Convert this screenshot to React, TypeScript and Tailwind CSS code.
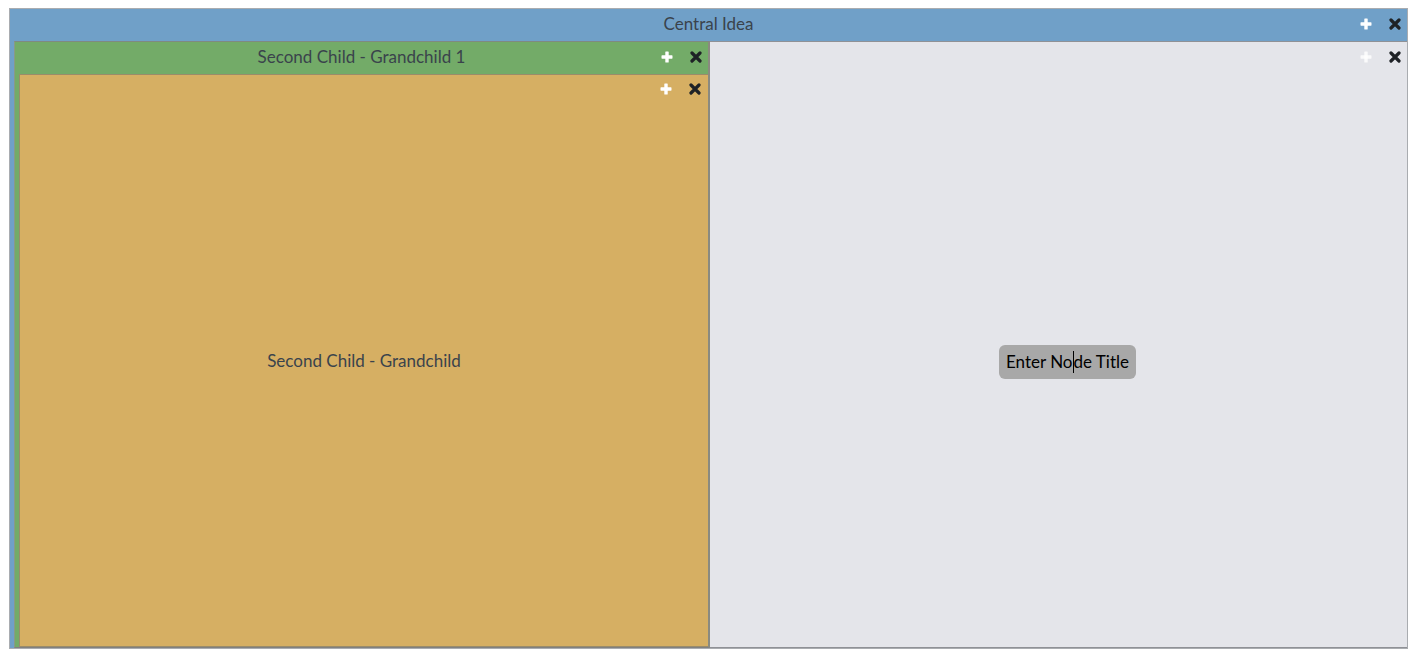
import React from "react";

const font = { fontFamily: "Lato, 'Noto Sans', sans-serif" };

function PlusIcon({ className = "" }: { className?: string }) {
  return (
    <svg viewBox="0 0 12 12" className={`h-3 w-3 ${className}`} fill="currentColor">
      <rect x="4.3" y="0.5" width="3.4" height="11" rx="0.6" />
      <rect x="0.5" y="4.3" width="11" height="3.4" rx="0.6" />
    </svg>
  );
}

function CloseIcon({ className = "" }: { className?: string }) {
  return (
    <svg viewBox="0 0 12 12" className={`h-3 w-3 ${className}`} fill="none">
      <path d="M2 2 L10 10 M10 2 L2 10" stroke="currentColor" strokeWidth="3.2" strokeLinecap="round" />
    </svg>
  );
}

function Actions({ plus = "text-white" }: { plus?: string }) {
  return (
    <div className="flex items-center gap-[17px] pb-[3px] pr-[6px]">
      <PlusIcon className={plus} />
      <CloseIcon className="text-[#1e2226]" />
    </div>
  );
}

function Header({ title, bg }: { title: string; bg: string }) {
  return (
    <div className={`relative flex h-8 shrink-0 items-center justify-center pb-[2px] ${bg}`}>
      <span className="text-[17px] text-[#3a434c]">{title}</span>
      <div className="absolute right-0 top-0 flex h-8 items-center">
        <Actions />
      </div>
    </div>
  );
}

export default function App() {
  return (
    <div className="h-[655px] w-[1428px] bg-white pl-[9px] pt-[8px]" style={font}>
      <div className="flex h-[641px] w-[1399px] flex-col border border-[#a9acb0] bg-[#70a0c8]">
        <Header title="Central Idea" bg="bg-[#70a0c8]" />

        <div className="flex min-h-0 flex-1 pl-[4px]">
          {/* Second child node */}
          <div className="flex w-[696px] shrink-0 flex-col border-l border-t border-r-2 border-b border-l-[#8a9a86] border-t-[#7f8a80] border-r-[#8a8a80] border-b-[#808080] bg-[#73ab68]">
            <Header title="Second Child - Grandchild 1" bg="bg-[#73ab68]" />
            <div className="flex min-h-0 flex-1 pl-[4px]">
              <div className="relative flex flex-1 items-center justify-center border-l border-t border-b border-[#9a8c6a] bg-[#d6af63]">
                <span className="text-[17px] text-[#3a434c]">Second Child - Grandchild</span>
                <div className="absolute right-0 top-0 flex h-[30px] items-center pr-[1px]">
                  <Actions />
                </div>
              </div>
            </div>
          </div>

          {/* New node being edited */}
          <div className="flex min-w-0 flex-1 flex-col border-t border-b border-[#8f9196] bg-[#e4e5ea]">
            <div className="flex h-8 shrink-0 items-center justify-end">
              <Actions plus="text-white/80" />
            </div>
            <div className="flex flex-1 items-center justify-center pt-[2px]">
              <div className="ml-[18px] flex h-[34px] items-center rounded-[6px] bg-[#a8a8a8] px-[7px] text-[17px] text-black">
                <span>Enter No</span>
                <span className="inline-block h-[22px] w-px bg-black" />
                <span>de Title</span>
              </div>
            </div>
          </div>
        </div>
      </div>
    </div>
  );
}
